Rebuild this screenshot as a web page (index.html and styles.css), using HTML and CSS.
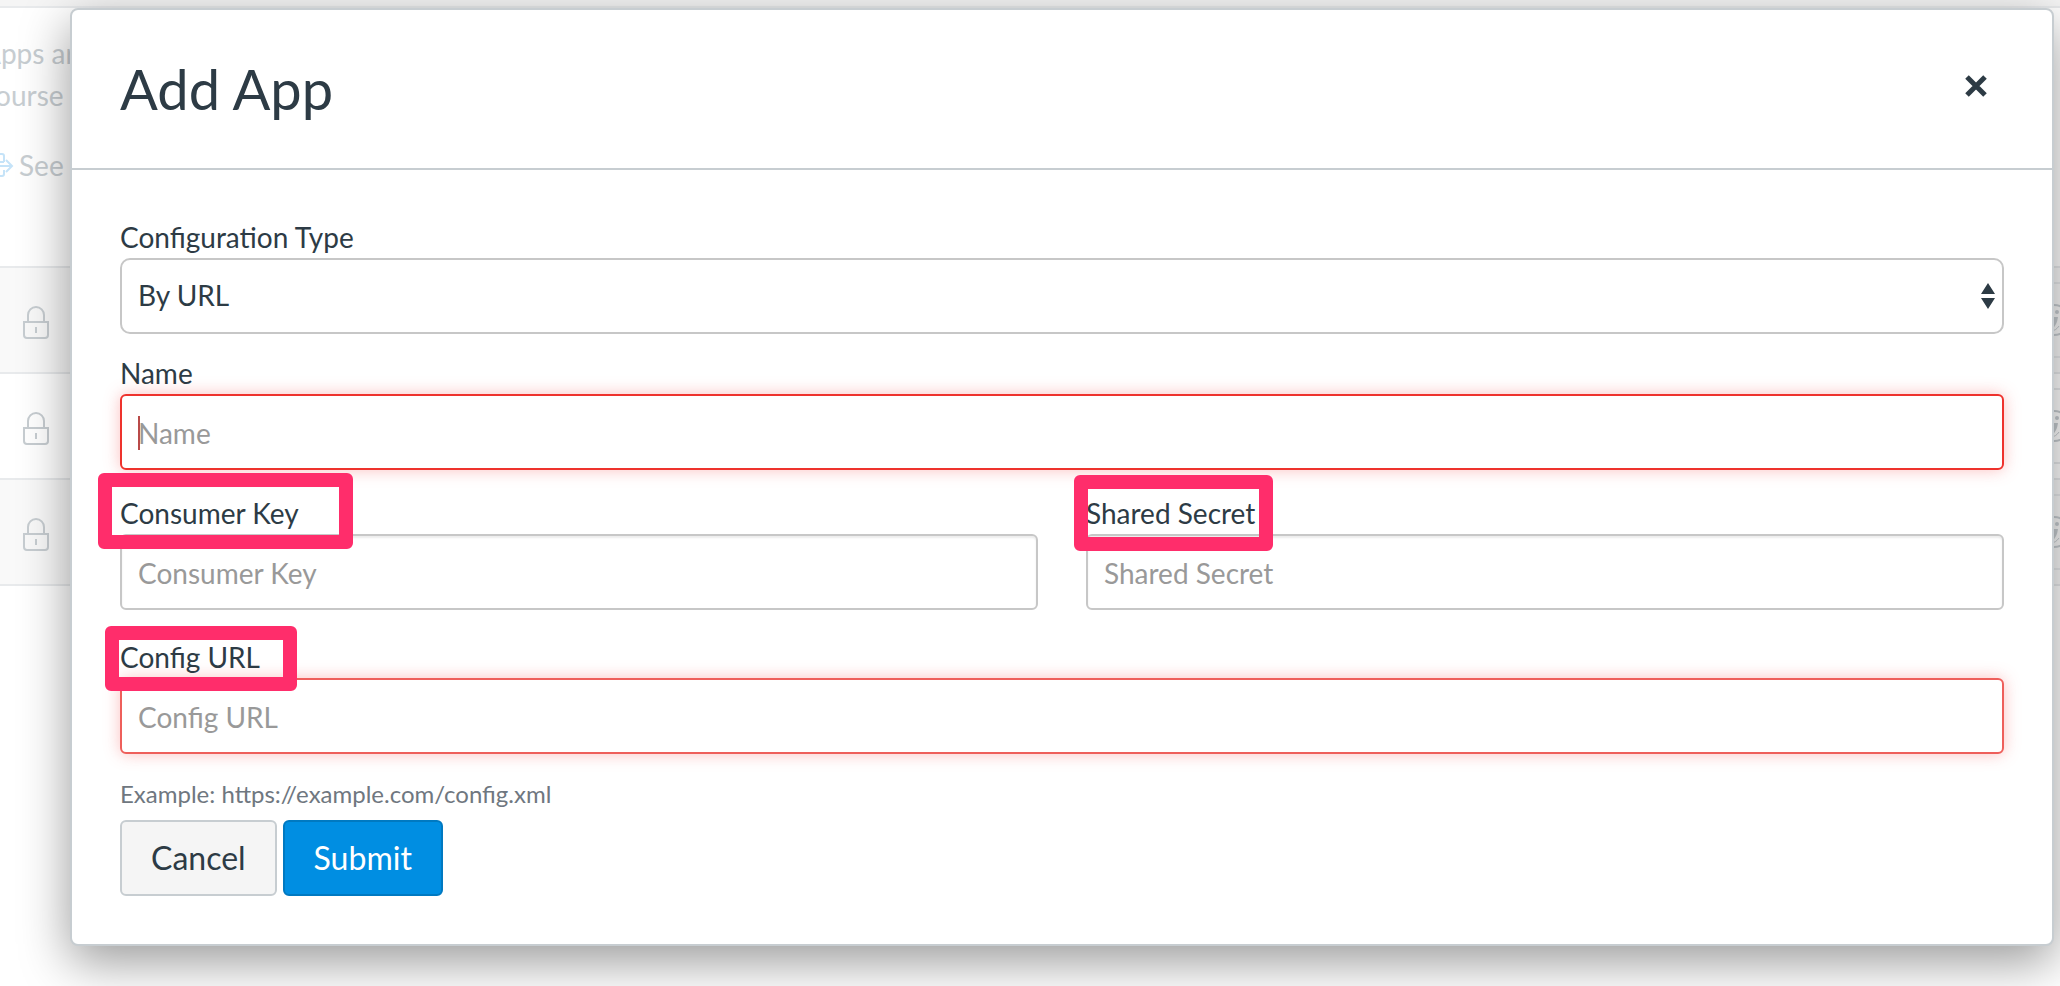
FILE: index.html
```html
<!DOCTYPE html>
<html lang="en">

<head>
  <meta charset="UTF-8">
  <meta name="viewport" content="width=device-width, initial-scale=1.0">
  <title>Add App</title>
  <link rel="stylesheet" href="styles.css">
</head>

<body>
  <svg width="0" height="0" class="symbols">
    <symbol id="lock" viewBox="0 0 26 34">
      <path d="M5 16V9a8 8 0 0 1 16 0v7M1 16h24v13a3 3 0 0 1-3 3H4a3 3 0 0 1-3-3zM13 21v6" fill="none" stroke="currentColor" stroke-width="2" />
    </symbol>
    <symbol id="badge" viewBox="0 0 34 34">
      <circle cx="17" cy="17" r="15" fill="none" stroke="currentColor" stroke-width="2" />
      <circle cx="20" cy="9" r="2" fill="currentColor" />
      <path d="M14 14h7c-1 6-2 8-7 14z" fill="currentColor" />
      <path d="M14 28c3 0 6-2 8-5" fill="none" stroke="currentColor" />
    </symbol>
  </svg>

  <div class="page">
    <div class="topbar"></div>
    <div class="intro">
      <p class="lead">Apps are<br>course</p>
      <p class="more">
        <svg class="link-icon" viewBox="0 0 28 24" fill="none" stroke="currentColor" stroke-width="2">
          <path d="M18 9V3a2 2 0 0 0-2-2H4M18 17v4a2 2 0 0 1-2 2H4M18 9H4M4 13h22M20 7l6 6-6 6" />
        </svg>
        See some
      </p>
    </div>
    <div class="apps">
      <div class="app-row">
        <svg class="lock"><use href="#lock" /></svg>
        <div class="app-menu"><svg><use href="#badge" /></svg></div>
      </div>
      <div class="app-row">
        <svg class="lock"><use href="#lock" /></svg>
        <div class="app-menu"><svg><use href="#badge" /></svg></div>
      </div>
      <div class="app-row">
        <svg class="lock"><use href="#lock" /></svg>
        <div class="app-menu"><svg><use href="#badge" /></svg></div>
      </div>
    </div>
  </div>

  <div class="modal" role="dialog" aria-labelledby="title">
    <div class="modal-header">
      <h1 id="title">Add App</h1>
      <button type="button" class="close" aria-label="Close">
        <svg viewBox="0 0 22 22" stroke="currentColor" stroke-width="5">
          <path d="M2 2l18 18M20 2L2 20" />
        </svg>
      </button>
    </div>
    <form class="modal-body">
      <div class="field">
        <label for="type">Configuration Type</label>
        <div class="select">
          <select id="type">
            <option>By URL</option>
          </select>
          <svg class="arrows" viewBox="0 0 14 26" fill="currentColor">
            <path d="M7 0l7 11H0zM0 15h14L7 26z" />
          </svg>
        </div>
      </div>
      <div class="field name-field">
        <label for="name">Name</label>
        <input type="text" id="name" class="invalid focused" placeholder="Name">
        <span class="caret"></span>
      </div>
      <div class="field-row">
        <div class="field">
          <label for="key">Consumer Key</label>
          <input type="text" id="key" placeholder="Consumer Key">
          <span class="mark mark-key"></span>
        </div>
        <div class="field">
          <label for="secret">Shared Secret</label>
          <input type="text" id="secret" placeholder="Shared Secret">
          <span class="mark mark-secret"></span>
        </div>
      </div>
      <div class="field url-field">
        <label for="url">Config URL</label>
        <input type="text" id="url" class="invalid" placeholder="Config URL">
        <span class="mark mark-url"></span>
      </div>
      <p class="hint">Example: https://example.com/config.xml</p>
      <div class="actions">
        <button type="button" class="btn">Cancel</button>
        <button type="submit" class="btn btn-primary">Submit</button>
      </div>
    </form>
  </div>
</body>

</html>
```

FILE: styles.css
```css
* {
  margin: 0;
  padding: 0;
  box-sizing: border-box;
}

body {
  position: relative;
  min-height: 100vh;
  padding: 8px 6px 40px 70px;
  overflow: hidden;
  background-color: #fff;
  color: #2d3b45;
  font-family: Lato, sans-serif;
  font-size: 28px;
  line-height: 40px;
}

.symbols {
  position: absolute;
}

/* page behind the dialog */
.page {
  position: absolute;
  top: 0;
  left: 0;
  right: 0;
  color: #c7cdd1;
}

.topbar {
  height: 8px;
  background-color: #f5f5f5;
  border-bottom: 2px solid #e8eaec;
}

.intro {
  height: 258px;
  padding-top: 24px;
  line-height: 42px;
  white-space: nowrap;
}

.lead {
  margin-left: -18px;
}

.more {
  display: flex;
  align-items: center;
  gap: 5px;
  margin: 28px 0 0 -14px;
}

.link-icon {
  width: 28px;
  height: 24px;
  color: #c5e3f8;
}

.app-row {
  display: flex;
  justify-content: space-between;
  height: 106px;
  padding: 16px 0 14px 23px;
  border-top: 2px solid #e8eaec;
}

.app-row:nth-child(odd) {
  background-color: #f9f9f9;
}

.app-row:last-child {
  height: 108px;
  border-bottom: 2px solid #e8eaec;
}

.lock {
  width: 26px;
  height: 34px;
  margin-top: 22px;
}

.app-menu {
  width: 60px;
  height: 76px;
  margin: -2px -20px 0 0;
  padding: 19px 15px;
  border: 2px solid #e8eaec;
}

.app-menu svg {
  width: 34px;
  height: 34px;
}

.modal {
  position: relative;
  background-color: #fff;
  border: 2px solid #c7cdd1;
  border-radius: 8px;
  box-shadow: 0 16px 50px rgba(0, 0, 0, 0.4);
}

.modal-header {
  display: flex;
  justify-content: space-between;
  align-items: center;
  height: 160px;
  padding: 0 65px 0 48px;
  border-bottom: 2px solid #c7cdd1;
}

h1 {
  font-size: 56px;
  font-weight: normal;
  line-height: 64px;
}

.close {
  width: 22px;
  height: 22px;
  margin-bottom: 6px;
  border: none;
  background: none;
  color: #2d3b45;
}

.close svg {
  display: block;
}

.modal-body {
  padding: 48px;
}

.field {
  position: relative;
}

.field label {
  display: block;
  padding-bottom: 2px;
  line-height: 38px;
}

.name-field {
  margin-top: 20px;
}

.field-row {
  display: grid;
  grid-template-columns: 1fr 1fr;
  gap: 48px;
  margin-top: 24px;
}

.url-field {
  margin-top: 28px;
}

input,
select {
  display: block;
  width: 100%;
  height: 76px;
  padding: 0 16px;
  border: 2px solid #c7c7c7;
  border-radius: 6px;
  background-color: #fff;
  color: #2d3b45;
  font: inherit;
  outline: none;
}

input {
  padding-top: 2px;
  box-shadow: inset 0 2px 2px rgba(0, 0, 0, 0.08);
}

input::placeholder {
  color: #999;
}

select {
  appearance: none;
  padding-bottom: 2px;
  border-radius: 10px;
}

.select {
  position: relative;
}

.arrows {
  position: absolute;
  top: 25px;
  right: 9px;
  width: 14px;
  height: 26px;
  pointer-events: none;
}

.invalid {
  border-color: #ee5f5b;
  box-shadow: 0 0 16px rgba(248, 80, 80, 0.36);
}

.focused {
  border-color: #ee322d;
}

.caret {
  position: absolute;
  left: 18px;
  bottom: 20px;
  width: 2px;
  height: 34px;
  background-color: #b94a48;
}

/* highlight frames over the labels */
.mark {
  position: absolute;
  border: 14px solid #ff2d6b;
  border-radius: 6px;
  pointer-events: none;
}

.mark-key {
  top: -21px;
  left: -22px;
  width: 255px;
  height: 76px;
}

.mark-secret {
  top: -19px;
  left: -12px;
  width: 199px;
  height: 76px;
}

.mark-url {
  top: -12px;
  left: -15px;
  width: 192px;
  height: 65px;
}

.hint {
  margin: 20px 0 6px;
  color: #6f7780;
  font-size: 24px;
}

.actions {
  display: flex;
  gap: 6px;
}

.btn {
  height: 76px;
  padding: 0 29px 2px;
  border: 2px solid #c7cdd1;
  border-radius: 6px;
  background-color: #f5f5f5;
  color: #2d3b45;
  font-family: inherit;
  font-size: 32px;
}

.btn-primary {
  border-color: #0079c1;
  background-color: #008ee2;
  color: #fff;
}
```
